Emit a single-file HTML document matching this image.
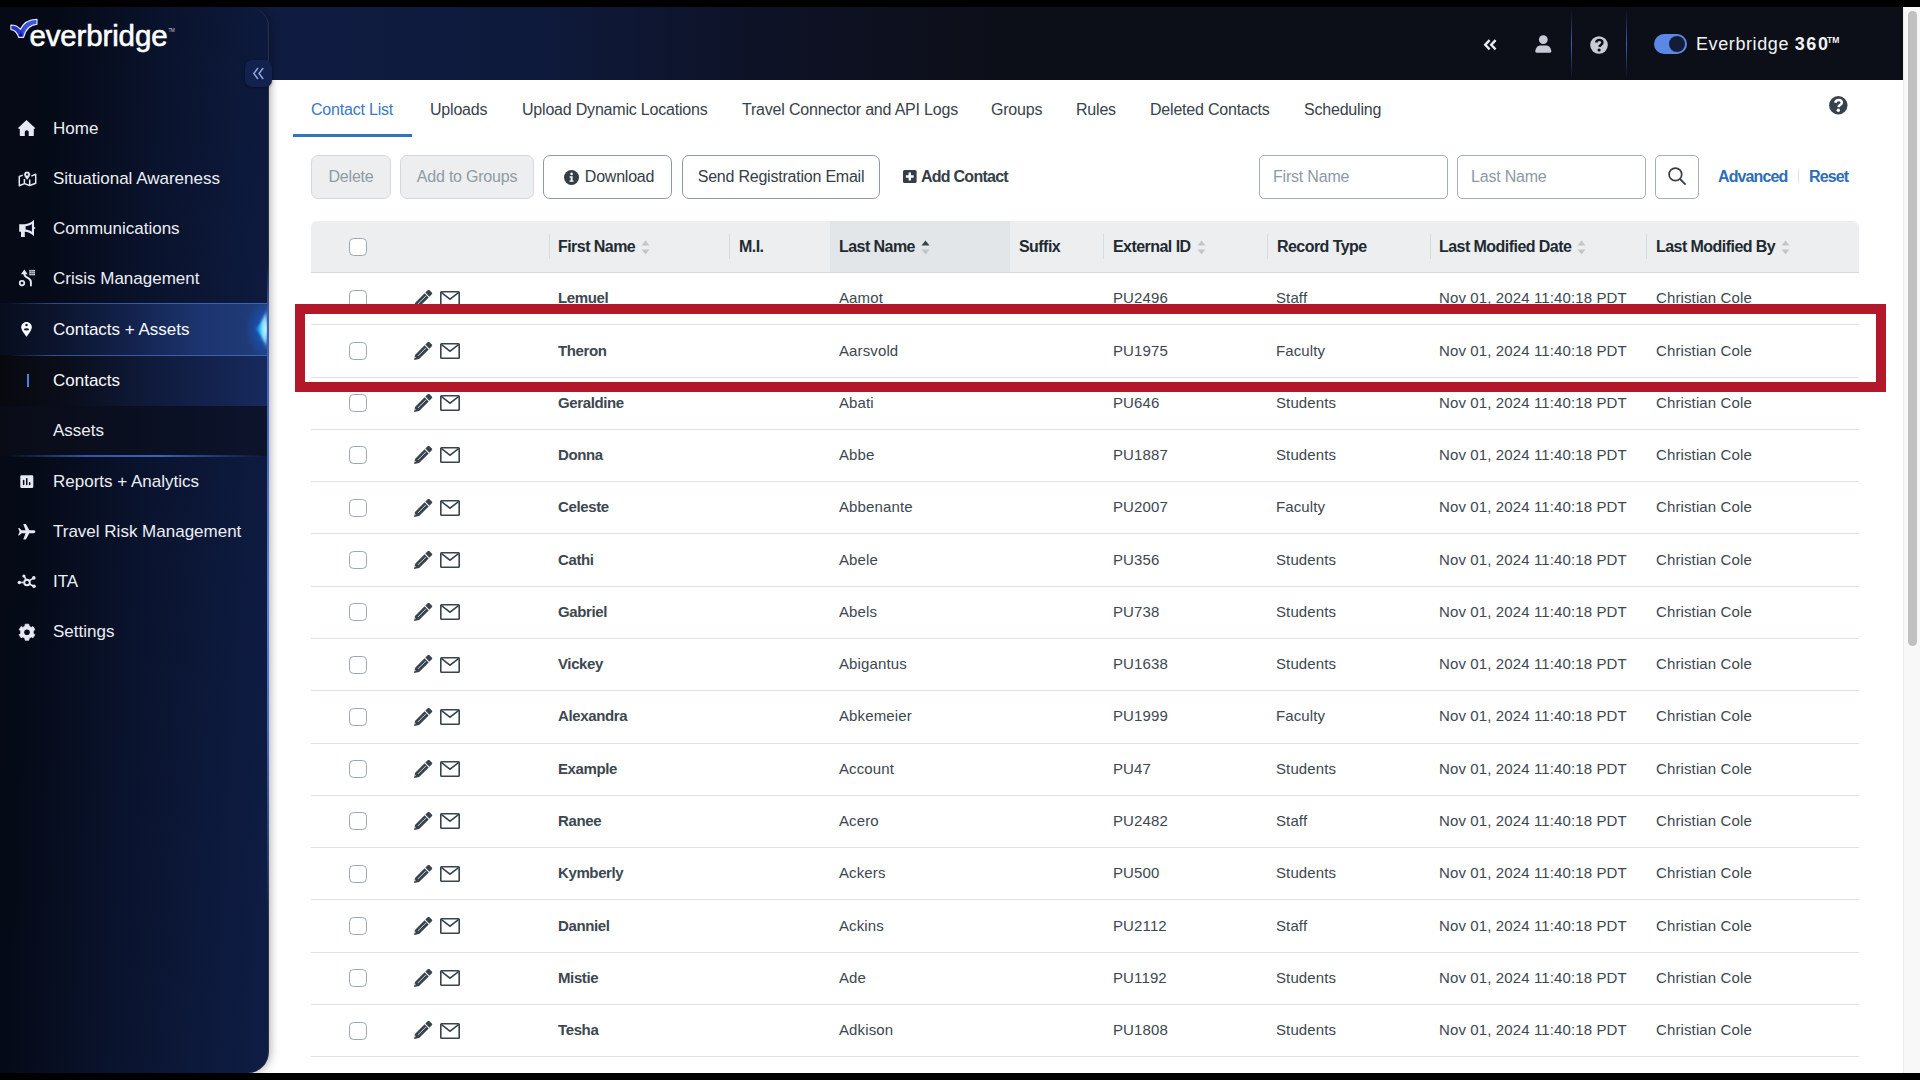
<!DOCTYPE html>
<html><head><meta charset="utf-8">
<style>
*{box-sizing:border-box;margin:0;padding:0}
html,body{width:1920px;height:1080px;overflow:hidden;background:#000;font-family:"Liberation Sans",sans-serif}
.abs{position:absolute}
#hdr{position:absolute;left:0;top:7px;width:1903px;height:73px;background:linear-gradient(90deg,#0f1b40 0px,#0f1b40 300px,#0e1a3b 540px,#0d1226 760px,#0c0f18 1000px,#0c0f17 1903px)}
#side{position:absolute;left:0;top:7px;width:269px;height:1066px;box-shadow:1px 0 10px rgba(0,0,0,.34);border-radius:0 20px 21px 0;background:linear-gradient(93deg,#050a16 0%,#050a17 18%,#0a142f 55%,#0f1d45 100%);overflow:hidden;border-right:1.5px solid #2c3142}
#main{position:absolute;left:230px;top:80px;width:1673px;height:993px;background:#fff;overflow:hidden}
#sb{position:absolute;left:1903px;top:7px;width:17px;height:1066px;background:#f8f8f8;border-left:1px solid #ececec}
#thumb{position:absolute;left:1908px;top:11px;width:9px;height:635px;border-radius:5px;background:#c1c1c1}
#coll{position:absolute;left:245px;top:60px;width:27px;height:27px;border-radius:7px;background:#13214e;box-shadow:0 1px 3px rgba(0,0,0,.4)}
.logo{position:absolute;left:29.5px;top:11.5px;color:#fff;font-size:29.5px;letter-spacing:-0.15px;font-weight:400;-webkit-text-stroke:0.6px #fff}
.nav{position:absolute;left:0;width:268px;height:50px;color:#eceef5;font-size:17px}
.nav span{position:absolute;left:53px;top:50%;margin-top:1px;transform:translateY(-50%);white-space:nowrap}
.nav svg{position:absolute;left:17px;top:50%;transform:translateY(-50%)}
.tab{position:absolute;top:101px;font-size:16px;color:#37424b;letter-spacing:-0.2px;white-space:nowrap}
.btn{position:absolute;top:155px;height:44px;border-radius:7px;border:1.3px solid #8d9ba6;background:#fff;font-size:16px;color:#343e47;letter-spacing:-0.22px;white-space:nowrap;display:flex;align-items:center;justify-content:center}
.btn.dis{background:#eceef0;border-color:#d3dadf;color:#8f9ba5}
.inp{position:absolute;top:155px;height:44px;border-radius:5px;border:1.4px solid #a3afb9;background:#fff;font-size:16px;color:#8d9aa6;letter-spacing:-0.2px;padding-left:13px;display:flex;align-items:center}
.link{position:absolute;top:168px;font-size:16px;color:#2d6db8;font-weight:700;letter-spacing:-0.9px}
#thead{position:absolute;left:311px;top:221px;width:1548px;height:52px;background:#eceef0;border-radius:6px 6px 0 0;border-bottom:1px solid #d4dade}
#lnhl{position:absolute;left:830px;top:221px;width:180px;height:51px;background:#e2e6e9}
.th{position:absolute;top:237.5px;font-size:16px;font-weight:700;color:#222a31;letter-spacing:-0.55px;white-space:nowrap}
.th svg{position:absolute;top:2px;margin-left:6px}
.sep{position:absolute;top:234px;width:1px;height:25px;background:#d6dbe0}
.row{position:absolute;left:311px;width:1548px;height:51px}
.rl{position:absolute;left:311px;width:1548px;height:1px;background:#dde2e6}
.cb{position:absolute;left:38.2px;top:16.3px;width:18px;height:18px;border:1.5px solid #9ba9b5;border-radius:4.5px;background:#fff}
.ic{position:absolute;left:102px;top:16.2px;height:19px}
.ic .pen{position:absolute;left:-0.5px;top:0px}
.ic .mail{position:absolute;left:27.3px;top:1.1px}
.c{position:absolute;top:15.9px;font-size:15px;color:#3c4750;letter-spacing:0.12px;white-space:nowrap}
.c.fn{left:247px;font-weight:700;letter-spacing:-0.38px}
.c.ln{left:528px}
.c.eid{left:802px}
.c.rt{left:965px}
.c.dt{left:1128px}
.c.by{left:1345px}
#hl{position:absolute;left:295px;top:304px;width:1591px;height:88px;border:10px solid #b21829}
</style></head>
<body>
<div id="hdr"></div>
<svg class="abs" style="left:1482px;top:38px" width="16" height="13" viewBox="0 0 16 13"><path d="M7.6 2.2 L3.2 6.8 L7.6 11.4 M13.6 2.2 L9.2 6.8 L13.6 11.4" fill="none" stroke="#e9ebf1" stroke-width="2.4"/></svg>
<svg class="abs" style="left:1535px;top:35px" width="17" height="18" viewBox="0 0 17 18"><circle cx="8.3" cy="4.6" r="4.4" fill="#c8cbd5"/><path d="M0.3 16.6 C0.3 12.4 3 10.4 5.6 10.4 H11 C13.6 10.4 16.3 12.4 16.3 16.6 C16.3 17.3 15.8 17.8 15.1 17.8 H1.5 C0.8 17.8 0.3 17.3 0.3 16.6 Z" fill="#c8cbd5"/></svg>
<div class="abs" style="left:1570.5px;top:10px;width:1.3px;height:68px;background:linear-gradient(180deg,rgba(40,70,150,0),#3c5fb0 50%,rgba(40,70,150,0))"></div>
<svg class="abs" style="left:1590px;top:36px" width="18" height="18" viewBox="0 0 18 18"><circle cx="9" cy="9" r="8.8" fill="#c8cbd5"/><path d="M6.1 6.6 C6.5 4.7 7.7 3.9 9.2 3.9 C11.1 3.9 12.5 5 12.5 6.6 C12.5 8.6 9.9 8.9 9.1 10.8" fill="none" stroke="#0c0f17" stroke-width="2.4"/><circle cx="9.1" cy="14" r="1.6" fill="#0c0f17"/></svg>
<div class="abs" style="left:1625.5px;top:10px;width:1.3px;height:68px;background:linear-gradient(180deg,rgba(40,70,150,0),#3c5fb0 50%,rgba(40,70,150,0))"></div>
<div class="abs" style="left:1654px;top:34px;width:33px;height:20px;border-radius:10px;background:#5b87e6"></div>
<div class="abs" style="left:1669px;top:36px;width:16px;height:16px;border-radius:50%;background:#141d38"></div>
<div class="abs" style="left:1696px;top:34px;font-size:18px;color:#f2f3f6;white-space:nowrap;letter-spacing:0.6px">Everbridge <b style="letter-spacing:1.6px">360</b><span style="font-size:8.5px;position:absolute;left:131px;top:1px;font-weight:700;letter-spacing:0">TM</span></div>
<div id="main"></div>
<div id="side">
  <div class="logo">everbridge</div>
  <svg class="abs" style="left:6px;top:7px" width="40" height="28" viewBox="0 0 40 28"><defs><linearGradient id="lg" x1="0" x2="1" y1="0" y2="0"><stop offset="0" stop-color="#2030c8"/><stop offset="0.45" stop-color="#2a3cd0"/><stop offset="0.5" stop-color="#3a52e2"/><stop offset="1" stop-color="#4058e8"/></linearGradient></defs><path d="M4.9 11 C8.5 11 12 12.5 14.5 15.3 C17 9 23 5.5 31 5.2 L31 10.2 C24 10.8 19.5 15 17.6 23.4 L12.6 23.4 C11 18 8 15.8 4.9 15.6 Z" fill="url(#lg)" stroke="#eef0ff" stroke-width="1.1" stroke-linejoin="round"/><path d="M13.4 22.6 L14.6 17.4 L16.6 22.6 Z" fill="#0a0a8a"/></svg>
  <div class="abs" style="left:168.5px;top:20.5px;color:#ccc;font-size:4.5px;letter-spacing:-0.2px">TM</div>
</div>

<!-- sidebar nav -->
<div class="abs" style="left:0;top:303px;width:266.5px;height:52px;background:linear-gradient(90deg,#080e1f 0%,#0b142c 20%,#13234e 50%,#1c356f 75%,#213c7a 100%)"></div>
<div class="abs" style="left:236px;top:304px;width:30.5px;height:50.5px;background:radial-gradient(ellipse 22px 30px at 100% 50%,rgba(20,120,235,.95) 0%,rgba(20,95,210,.55) 45%,rgba(25,70,170,0) 100%)"></div>
<div class="abs" style="left:252px;top:306px;width:15px;height:46px;filter:blur(1.2px)"><div style="position:absolute;left:1px;top:2px;width:13.5px;height:42px;clip-path:polygon(100% 0%,90% 14%,60% 35%,20% 50%,60% 65%,90% 86%,100% 100%);background:linear-gradient(90deg,rgba(30,140,240,0) 0%,#1aa0f0 45%,#70e4ff 75%,#f4ffff 100%);-webkit-mask-image:linear-gradient(180deg,rgba(0,0,0,.3) 0%,#000 38%,#000 62%,rgba(0,0,0,.3) 100%)"></div></div>
<div class="abs" style="left:258px;top:312px;width:8.5px;height:34px;filter:blur(1px);background:radial-gradient(ellipse 8px 16px at 100% 50%,rgba(240,255,255,.95) 0%,rgba(150,235,255,.7) 45%,rgba(60,180,255,0) 100%)"></div>
<div class="abs" style="left:0;top:355px;width:266.5px;height:51px;background:linear-gradient(90deg,#08090e 0%,#0a0e1a 25%,#0f1a3a 55%,#172a5e 100%)"></div>
<div class="abs" style="left:0;top:406px;width:266.5px;height:50px;background:linear-gradient(90deg,#090c17 0%,#0a0f20 50%,#0c142c 100%)"></div>
<div class="abs" style="left:0;top:302.5px;width:266.5px;height:1.5px;background:linear-gradient(90deg,rgba(60,100,190,0) 3%,#2c4a8c 20%,#3a5ea8 60%,#3f64b0 100%)"></div>
<div class="abs" style="left:0;top:354.5px;width:266.5px;height:1.5px;background:linear-gradient(90deg,rgba(60,100,190,0) 3%,#31528f 20%,#3c60a8 60%,#3f64b0 100%)"></div>
<div class="abs" style="left:8px;top:455px;width:255px;height:1.5px;background:linear-gradient(90deg,rgba(60,100,190,0),#2f55a8 30%,#3a64b8 60%,rgba(70,110,200,0))"></div>
<div class="abs" style="left:26.7px;top:374.3px;width:2.5px;height:12.5px;background:#4a7fe6"></div>

<div class="nav" style="top:103px"><svg width="26" height="26" viewBox="0 0 26 26" style="left:14px;top:12px;transform:none"><path d="M12.5 5 L21.4 13.2 L19.8 14.1 V20.2 C19.8 20.7 19.4 21.1 18.9 21.1 H14.7 V17 C14.7 16 13.9 15.3 12.8 15.3 C11.7 15.3 10.8 16 10.8 17 V21.1 H6.7 C6.2 21.1 5.8 20.7 5.8 20.2 V14.1 L3.8 13.2 Z" fill="#e6e9f4"/></svg><span>Home</span></div>
<div class="nav" style="top:153px"><svg width="26" height="26" viewBox="0 0 26 26" style="left:14px;top:13px;transform:none"><path d="M8.7 9.3 L5.3 10.4 V19.8 L10.4 17.6 L15.7 19.5 L21.7 17.3 V8.2 L17.3 10.1" fill="none" stroke="#e6e9f4" stroke-width="1.5" stroke-linejoin="round"/><path d="M10.4 13 V17.6 M15.7 13.5 V19.5" stroke="#e6e9f4" stroke-width="1.5"/><path d="M13.1 5.2 C15.1 5.2 16.5 6.7 16.5 8.6 C16.5 10.6 13.1 14.2 13.1 14.2 C13.1 14.2 9.7 10.6 9.7 8.6 C9.7 6.7 11.1 5.2 13.1 5.2 Z" fill="#e6e9f4" stroke="#070d1e" stroke-width="0.8"/><circle cx="13.1" cy="8.6" r="1.1" fill="#070d1e"/></svg><span>Situational Awareness</span></div>
<div class="nav" style="top:203px"><svg width="26" height="26" viewBox="0 0 26 26" style="left:14px;top:13px;transform:none"><path d="M5.2 8.2 H10.8 C14 8.2 17 6.6 20 4.1 V20 C17 17.4 14 15.7 10.8 15.7 V21 H7 V15.7 H5.2 Z" fill="#e6e9f4"/><path d="M11.6 10.3 C13.6 10.2 15.8 9.4 17.9 8.1 V15.8 C15.8 14.5 13.6 13.7 11.6 13.6 Z" fill="#070d1e"/><path d="M20 10.8 L21.6 12 L20 13.2 Z" fill="#e6e9f4"/></svg><span>Communications</span></div>
<div class="nav" style="top:253px"><svg width="26" height="26" viewBox="0 0 26 26" style="left:14px;top:12px;transform:none"><circle cx="8" cy="18.1" r="2.3" fill="none" stroke="#e6e9f4" stroke-width="1.7"/><path d="M16.9 20.6 V17 C16.9 14.2 14.8 13.3 12.8 12.3 C11.2 11.5 10.3 10.4 10.3 8.6 V8.2" fill="none" stroke="#e6e9f4" stroke-width="1.9" stroke-linecap="round"/><path d="M10.3 4.6 L13.6 9.2 H7 Z" fill="#e6e9f4"/><rect x="15.4" y="4.9" width="5.5" height="5.4" fill="#e6e9f4"/><path d="M17.2 4.9 V10.3 M19.1 4.9 V10.3 M15.4 6.7 H20.9 M15.4 8.5 H20.9" stroke="#070d1e" stroke-width="0.45"/></svg><span>Crisis Management</span></div>
<div class="nav" style="top:304px"><svg width="26" height="26" viewBox="0 0 26 26" style="left:14px;top:12px;transform:none"><path d="M12.5 6 C15.5 6 17.8 8.3 17.8 11.3 C17.8 14.6 12.5 20.8 12.5 20.8 C12.5 20.8 7.2 14.6 7.2 11.3 C7.2 8.3 9.5 6 12.5 6 Z" fill="#fafbff"/><circle cx="12.5" cy="8.9" r="1.25" fill="#0f1b3c"/><ellipse cx="12.5" cy="13.4" rx="2.6" ry="1.15" fill="#0f1b3c"/></svg><span style="color:#fafbff">Contacts + Assets</span></div>
<div class="nav" style="top:355px"><span style="color:#fafbff">Contacts</span></div>
<div class="nav" style="top:405px"><span>Assets</span></div>
<div class="nav" style="top:456px"><svg width="26" height="26" viewBox="0 0 26 26" style="left:14px;top:12px;transform:none"><rect x="6.3" y="7.2" width="13" height="12.8" rx="1.3" fill="#e6e9f4"/><path d="M9.65 12.4 V16.6 M12.75 10.7 V16.6 M15.65 14.8 V16.6" stroke="#070d1e" stroke-width="1.5" stroke-linecap="round"/></svg><span>Reports + Analytics</span></div>
<div class="nav" style="top:506px"><svg width="26" height="26" viewBox="0 0 26 26" style="left:14px;top:12px;transform:none"><path d="M4.2 10.3 C4.5 10 5.3 10 5.8 10.4 L7.6 12.3 H11.6 L9.4 6.6 C9.3 6.2 9.6 6 10 6 H11.4 C11.8 6 12 6.1 12.2 6.4 L15.3 12.3 H19.6 C20.6 12.3 21.3 12.9 21.3 13.75 C21.3 14.6 20.6 15.2 19.6 15.2 H15.3 L12.2 21.1 C12 21.4 11.8 21.5 11.4 21.5 H10 C9.6 21.5 9.3 21.3 9.4 20.9 L11.6 15.2 H7.6 L5.8 17.1 C5.3 17.5 4.5 17.5 4.2 17.2 L5.6 13.75 Z" fill="#e6e9f4"/></svg><span>Travel Risk Management</span></div>
<div class="nav" style="top:556px"><svg width="26" height="26" viewBox="0 0 26 26" style="left:14px;top:12px;transform:none"><path d="M5.3 14.5 H9.5 M9.9 8 L12 11.4 M19.8 9.9 L15.5 12.6 M20 18.3 L15.6 16.2" stroke="#e6e9f4" stroke-width="1.5"/><circle cx="13" cy="14.5" r="2.8" fill="none" stroke="#e6e9f4" stroke-width="2"/><circle cx="5.3" cy="14.5" r="1.7" fill="#e6e9f4"/><circle cx="9.9" cy="8" r="1.6" fill="#e6e9f4"/><circle cx="19.8" cy="9.9" r="1.8" fill="#e6e9f4"/><circle cx="20" cy="18.3" r="1.8" fill="#e6e9f4"/></svg><span>ITA</span></div>
<div class="nav" style="top:606px"><svg width="26" height="26" viewBox="0 0 26 26" style="left:14px;top:12px;transform:none"><path d="M9.85 8.74 L10.95 8.24 L11.16 6.21 L14.84 6.21 L15.05 8.24 L16.15 8.74 L17.13 9.45 L19.00 8.61 L20.84 11.80 L19.18 13.00 L19.30 14.20 L19.18 15.40 L20.84 16.60 L19.00 19.79 L17.13 18.95 L16.15 19.66 L15.05 20.16 L14.84 22.19 L11.16 22.19 L10.95 20.16 L9.85 19.66 L8.87 18.95 L7.00 19.79 L5.16 16.60 L6.82 15.40 L6.70 14.20 L6.82 13.00 L5.16 11.80 L7.00 8.61 L8.87 9.45 Z" fill="#e6e9f4" stroke="#e6e9f4" stroke-width="0.8" stroke-linejoin="round"/><circle cx="13" cy="14.2" r="2.8" fill="#070d1e"/></svg><span>Settings</span></div>

<div class="abs" style="left:266.5px;top:262px;width:2.5px;height:660px;background:linear-gradient(180deg,rgba(60,90,170,0) 0%,#4560a8 8%,#4a6cc0 30%,#5a80d8 50%,#4a6cc0 70%,rgba(60,90,170,0) 100%)"></div>
<div id="coll"><svg style="position:absolute;left:7px;top:7px" width="13" height="13" viewBox="0 0 13 13"><path d="M6 1 L1.8 6.5 L6 12 M11.2 1 L7 6.5 L11.2 12" fill="none" stroke="#8ea6e0" stroke-width="1.5"/></svg></div>

<div id="sb"></div><div id="thumb"></div>

<!-- tabs -->
<div class="tab" style="left:311px;color:#3a78c5">Contact List</div>
<div class="abs" style="left:293px;top:134.2px;width:119px;height:2.6px;background:#3074bb"></div>
<div class="tab" style="left:430px">Uploads</div>
<div class="tab" style="left:522px">Upload Dynamic Locations</div>
<div class="tab" style="left:742px">Travel Connector and API Logs</div>
<div class="tab" style="left:991px">Groups</div>
<div class="tab" style="left:1076px">Rules</div>
<div class="tab" style="left:1150px">Deleted Contacts</div>
<div class="tab" style="left:1304px">Scheduling</div>

<svg class="abs" style="left:1829px;top:96.2px" width="19" height="19" viewBox="0 0 19 19"><circle cx="9.3" cy="9.2" r="9.2" fill="#37434c"/><path d="M6.3 6.7 C6.7 4.8 7.9 4 9.5 4 C11.4 4 12.8 5.1 12.8 6.7 C12.8 8.7 10.1 9 9.3 11" fill="none" stroke="#fff" stroke-width="2.5"/><circle cx="9.3" cy="14.3" r="1.7" fill="#fff"/></svg>
<!-- buttons -->
<div class="btn dis" style="left:311px;width:80px">Delete</div>
<div class="btn dis" style="left:400px;width:134px">Add to Groups</div>
<div class="btn" style="left:543px;width:129px"><svg width="15" height="15" viewBox="0 0 15 15" style="margin-right:6px;margin-left:3px"><circle cx="7.5" cy="7.5" r="7.5" fill="#343e47"/><circle cx="7.6" cy="3.9" r="1.3" fill="#fff"/><path d="M5.6 6.2 H8.6 V10.6 H9.6 V11.8 H5.6 V10.6 H6.6 V7.4 H5.6 Z" fill="#fff"/></svg>Download</div>
<div class="btn" style="left:682px;width:198px">Send Registration Email</div>
<svg class="abs" style="left:903px;top:170px" width="14" height="13" viewBox="0 0 14 13"><rect x="0" y="0" width="13.6" height="13" rx="1.6" fill="#343e47"/><path d="M6.8 2.6 V10.4 M2.9 6.5 H10.7" stroke="#fff" stroke-width="2.4"/></svg><div class="abs" style="left:921px;top:168px;font-size:16px;font-weight:700;color:#343e47;letter-spacing:-0.75px">Add Contact</div>

<div class="inp" style="left:1259px;width:189px">First Name</div>
<div class="inp" style="left:1457px;width:189px">Last Name</div>
<div class="inp" style="left:1655px;width:44px;border-radius:5px"></div><svg class="abs" style="left:1667px;top:166px" width="20" height="20" viewBox="0 0 20 20"><circle cx="8.4" cy="8.4" r="6.3" fill="none" stroke="#343e47" stroke-width="1.7"/><path d="M13 13 L18.6 18.6" stroke="#343e47" stroke-width="1.8"/></svg>
<div class="link" style="left:1718px">Advanced</div>
<div class="abs" style="left:1798px;top:169px;width:1px;height:14px;background:#dfe3e7"></div>
<div class="link" style="left:1809px">Reset</div>

<!-- table -->
<div id="thead"></div>
<div id="lnhl"></div>
<div class="abs" style="left:311px;top:221.7px"><div class="cb"></div></div>
<div class="sep" style="left:549px"></div>
<div class="sep" style="left:729px"></div>
<div class="sep" style="left:1103px"></div>
<div class="sep" style="left:1267px"></div>
<div class="sep" style="left:1430px"></div>
<div class="sep" style="left:1646px"></div>
<div class="th" style="left:558px">First Name<svg class="sort" width="9" height="15" viewBox="0 0 9 15"><path d="M4.5 0.5 L8.5 5.5 H0.5 Z" fill="#c3c5c7"/><path d="M4.5 14.5 L8.5 9.5 H0.5 Z" fill="#c3c5c7"/></svg></div>
<div class="th" style="left:739px">M.I.</div>
<div class="th" style="left:839px">Last Name<svg class="sort" width="9" height="15" viewBox="0 0 9 15"><path d="M4.5 0.5 L8.5 5.5 H0.5 Z" fill="#37434d"/><path d="M4.5 14.5 L8.5 9.5 H0.5 Z" fill="#c3c5c7"/></svg></div>
<div class="th" style="left:1019px">Suffix</div>
<div class="th" style="left:1113px">External ID<svg class="sort" width="9" height="15" viewBox="0 0 9 15"><path d="M4.5 0.5 L8.5 5.5 H0.5 Z" fill="#c3c5c7"/><path d="M4.5 14.5 L8.5 9.5 H0.5 Z" fill="#c3c5c7"/></svg></div>
<div class="th" style="left:1277px">Record Type</div>
<div class="th" style="left:1439px">Last Modified Date<svg class="sort" width="9" height="15" viewBox="0 0 9 15"><path d="M4.5 0.5 L8.5 5.5 H0.5 Z" fill="#c3c5c7"/><path d="M4.5 14.5 L8.5 9.5 H0.5 Z" fill="#c3c5c7"/></svg></div>
<div class="th" style="left:1656px">Last Modified By<svg class="sort" width="9" height="15" viewBox="0 0 9 15"><path d="M4.5 0.5 L8.5 5.5 H0.5 Z" fill="#c3c5c7"/><path d="M4.5 14.5 L8.5 9.5 H0.5 Z" fill="#c3c5c7"/></svg></div>

<div class="rl" style="top:324px"></div><div class="row" style="top:273.35px"><div class="cb"></div><div class="ic"><svg class="pen" width="20" height="20" viewBox="0 0 20 20"><path d="M12.31 2.59 L14.72 0.18 Q15.64 -0.74 16.56 0.18 L18.82 2.44 Q19.74 3.36 18.82 4.28 L16.41 6.69 Z M1.99 12.91 L11.61 3.29 L15.71 7.39 L6.09 17.01 L1.00 18.00 Z" fill="#37434d"/><path d="M4.89 13.97 L13.09 5.77" stroke="#fff" stroke-width="0.75"/><path d="M1.42 16.16 L1.78 14.11 L2.70 16.02 Z" fill="#fff"/></svg><svg class="mail" width="20" height="16" viewBox="0 0 20 16"><rect x="0.8" y="0.8" width="18.4" height="14.4" rx="0.8" fill="none" stroke="#37434d" stroke-width="1.6"/><path d="M1.2 1.4 L10 8.2 L18.8 1.4" fill="none" stroke="#37434d" stroke-width="1.5"/></svg></div><div class="c fn">Lemuel</div><div class="c ln">Aamot</div><div class="c eid">PU2496</div><div class="c rt">Staff</div><div class="c dt">Nov 01, 2024 11:40:18 PDT</div><div class="c by">Christian Cole</div></div>
<div class="rl" style="top:377px"></div><div class="row" style="top:325.63px"><div class="cb"></div><div class="ic"><svg class="pen" width="20" height="20" viewBox="0 0 20 20"><path d="M12.31 2.59 L14.72 0.18 Q15.64 -0.74 16.56 0.18 L18.82 2.44 Q19.74 3.36 18.82 4.28 L16.41 6.69 Z M1.99 12.91 L11.61 3.29 L15.71 7.39 L6.09 17.01 L1.00 18.00 Z" fill="#37434d"/><path d="M4.89 13.97 L13.09 5.77" stroke="#fff" stroke-width="0.75"/><path d="M1.42 16.16 L1.78 14.11 L2.70 16.02 Z" fill="#fff"/></svg><svg class="mail" width="20" height="16" viewBox="0 0 20 16"><rect x="0.8" y="0.8" width="18.4" height="14.4" rx="0.8" fill="none" stroke="#37434d" stroke-width="1.6"/><path d="M1.2 1.4 L10 8.2 L18.8 1.4" fill="none" stroke="#37434d" stroke-width="1.5"/></svg></div><div class="c fn">Theron</div><div class="c ln">Aarsvold</div><div class="c eid">PU1975</div><div class="c rt">Faculty</div><div class="c dt">Nov 01, 2024 11:40:18 PDT</div><div class="c by">Christian Cole</div></div>
<div class="rl" style="top:429px"></div><div class="row" style="top:377.91px"><div class="cb"></div><div class="ic"><svg class="pen" width="20" height="20" viewBox="0 0 20 20"><path d="M12.31 2.59 L14.72 0.18 Q15.64 -0.74 16.56 0.18 L18.82 2.44 Q19.74 3.36 18.82 4.28 L16.41 6.69 Z M1.99 12.91 L11.61 3.29 L15.71 7.39 L6.09 17.01 L1.00 18.00 Z" fill="#37434d"/><path d="M4.89 13.97 L13.09 5.77" stroke="#fff" stroke-width="0.75"/><path d="M1.42 16.16 L1.78 14.11 L2.70 16.02 Z" fill="#fff"/></svg><svg class="mail" width="20" height="16" viewBox="0 0 20 16"><rect x="0.8" y="0.8" width="18.4" height="14.4" rx="0.8" fill="none" stroke="#37434d" stroke-width="1.6"/><path d="M1.2 1.4 L10 8.2 L18.8 1.4" fill="none" stroke="#37434d" stroke-width="1.5"/></svg></div><div class="c fn">Geraldine</div><div class="c ln">Abati</div><div class="c eid">PU646</div><div class="c rt">Students</div><div class="c dt">Nov 01, 2024 11:40:18 PDT</div><div class="c by">Christian Cole</div></div>
<div class="rl" style="top:481px"></div><div class="row" style="top:430.19px"><div class="cb"></div><div class="ic"><svg class="pen" width="20" height="20" viewBox="0 0 20 20"><path d="M12.31 2.59 L14.72 0.18 Q15.64 -0.74 16.56 0.18 L18.82 2.44 Q19.74 3.36 18.82 4.28 L16.41 6.69 Z M1.99 12.91 L11.61 3.29 L15.71 7.39 L6.09 17.01 L1.00 18.00 Z" fill="#37434d"/><path d="M4.89 13.97 L13.09 5.77" stroke="#fff" stroke-width="0.75"/><path d="M1.42 16.16 L1.78 14.11 L2.70 16.02 Z" fill="#fff"/></svg><svg class="mail" width="20" height="16" viewBox="0 0 20 16"><rect x="0.8" y="0.8" width="18.4" height="14.4" rx="0.8" fill="none" stroke="#37434d" stroke-width="1.6"/><path d="M1.2 1.4 L10 8.2 L18.8 1.4" fill="none" stroke="#37434d" stroke-width="1.5"/></svg></div><div class="c fn">Donna</div><div class="c ln">Abbe</div><div class="c eid">PU1887</div><div class="c rt">Students</div><div class="c dt">Nov 01, 2024 11:40:18 PDT</div><div class="c by">Christian Cole</div></div>
<div class="rl" style="top:533px"></div><div class="row" style="top:482.46px"><div class="cb"></div><div class="ic"><svg class="pen" width="20" height="20" viewBox="0 0 20 20"><path d="M12.31 2.59 L14.72 0.18 Q15.64 -0.74 16.56 0.18 L18.82 2.44 Q19.74 3.36 18.82 4.28 L16.41 6.69 Z M1.99 12.91 L11.61 3.29 L15.71 7.39 L6.09 17.01 L1.00 18.00 Z" fill="#37434d"/><path d="M4.89 13.97 L13.09 5.77" stroke="#fff" stroke-width="0.75"/><path d="M1.42 16.16 L1.78 14.11 L2.70 16.02 Z" fill="#fff"/></svg><svg class="mail" width="20" height="16" viewBox="0 0 20 16"><rect x="0.8" y="0.8" width="18.4" height="14.4" rx="0.8" fill="none" stroke="#37434d" stroke-width="1.6"/><path d="M1.2 1.4 L10 8.2 L18.8 1.4" fill="none" stroke="#37434d" stroke-width="1.5"/></svg></div><div class="c fn">Celeste</div><div class="c ln">Abbenante</div><div class="c eid">PU2007</div><div class="c rt">Faculty</div><div class="c dt">Nov 01, 2024 11:40:18 PDT</div><div class="c by">Christian Cole</div></div>
<div class="rl" style="top:586px"></div><div class="row" style="top:534.74px"><div class="cb"></div><div class="ic"><svg class="pen" width="20" height="20" viewBox="0 0 20 20"><path d="M12.31 2.59 L14.72 0.18 Q15.64 -0.74 16.56 0.18 L18.82 2.44 Q19.74 3.36 18.82 4.28 L16.41 6.69 Z M1.99 12.91 L11.61 3.29 L15.71 7.39 L6.09 17.01 L1.00 18.00 Z" fill="#37434d"/><path d="M4.89 13.97 L13.09 5.77" stroke="#fff" stroke-width="0.75"/><path d="M1.42 16.16 L1.78 14.11 L2.70 16.02 Z" fill="#fff"/></svg><svg class="mail" width="20" height="16" viewBox="0 0 20 16"><rect x="0.8" y="0.8" width="18.4" height="14.4" rx="0.8" fill="none" stroke="#37434d" stroke-width="1.6"/><path d="M1.2 1.4 L10 8.2 L18.8 1.4" fill="none" stroke="#37434d" stroke-width="1.5"/></svg></div><div class="c fn">Cathi</div><div class="c ln">Abele</div><div class="c eid">PU356</div><div class="c rt">Students</div><div class="c dt">Nov 01, 2024 11:40:18 PDT</div><div class="c by">Christian Cole</div></div>
<div class="rl" style="top:638px"></div><div class="row" style="top:587.02px"><div class="cb"></div><div class="ic"><svg class="pen" width="20" height="20" viewBox="0 0 20 20"><path d="M12.31 2.59 L14.72 0.18 Q15.64 -0.74 16.56 0.18 L18.82 2.44 Q19.74 3.36 18.82 4.28 L16.41 6.69 Z M1.99 12.91 L11.61 3.29 L15.71 7.39 L6.09 17.01 L1.00 18.00 Z" fill="#37434d"/><path d="M4.89 13.97 L13.09 5.77" stroke="#fff" stroke-width="0.75"/><path d="M1.42 16.16 L1.78 14.11 L2.70 16.02 Z" fill="#fff"/></svg><svg class="mail" width="20" height="16" viewBox="0 0 20 16"><rect x="0.8" y="0.8" width="18.4" height="14.4" rx="0.8" fill="none" stroke="#37434d" stroke-width="1.6"/><path d="M1.2 1.4 L10 8.2 L18.8 1.4" fill="none" stroke="#37434d" stroke-width="1.5"/></svg></div><div class="c fn">Gabriel</div><div class="c ln">Abels</div><div class="c eid">PU738</div><div class="c rt">Students</div><div class="c dt">Nov 01, 2024 11:40:18 PDT</div><div class="c by">Christian Cole</div></div>
<div class="rl" style="top:690px"></div><div class="row" style="top:639.30px"><div class="cb"></div><div class="ic"><svg class="pen" width="20" height="20" viewBox="0 0 20 20"><path d="M12.31 2.59 L14.72 0.18 Q15.64 -0.74 16.56 0.18 L18.82 2.44 Q19.74 3.36 18.82 4.28 L16.41 6.69 Z M1.99 12.91 L11.61 3.29 L15.71 7.39 L6.09 17.01 L1.00 18.00 Z" fill="#37434d"/><path d="M4.89 13.97 L13.09 5.77" stroke="#fff" stroke-width="0.75"/><path d="M1.42 16.16 L1.78 14.11 L2.70 16.02 Z" fill="#fff"/></svg><svg class="mail" width="20" height="16" viewBox="0 0 20 16"><rect x="0.8" y="0.8" width="18.4" height="14.4" rx="0.8" fill="none" stroke="#37434d" stroke-width="1.6"/><path d="M1.2 1.4 L10 8.2 L18.8 1.4" fill="none" stroke="#37434d" stroke-width="1.5"/></svg></div><div class="c fn">Vickey</div><div class="c ln">Abigantus</div><div class="c eid">PU1638</div><div class="c rt">Students</div><div class="c dt">Nov 01, 2024 11:40:18 PDT</div><div class="c by">Christian Cole</div></div>
<div class="rl" style="top:743px"></div><div class="row" style="top:691.58px"><div class="cb"></div><div class="ic"><svg class="pen" width="20" height="20" viewBox="0 0 20 20"><path d="M12.31 2.59 L14.72 0.18 Q15.64 -0.74 16.56 0.18 L18.82 2.44 Q19.74 3.36 18.82 4.28 L16.41 6.69 Z M1.99 12.91 L11.61 3.29 L15.71 7.39 L6.09 17.01 L1.00 18.00 Z" fill="#37434d"/><path d="M4.89 13.97 L13.09 5.77" stroke="#fff" stroke-width="0.75"/><path d="M1.42 16.16 L1.78 14.11 L2.70 16.02 Z" fill="#fff"/></svg><svg class="mail" width="20" height="16" viewBox="0 0 20 16"><rect x="0.8" y="0.8" width="18.4" height="14.4" rx="0.8" fill="none" stroke="#37434d" stroke-width="1.6"/><path d="M1.2 1.4 L10 8.2 L18.8 1.4" fill="none" stroke="#37434d" stroke-width="1.5"/></svg></div><div class="c fn">Alexandra</div><div class="c ln">Abkemeier</div><div class="c eid">PU1999</div><div class="c rt">Faculty</div><div class="c dt">Nov 01, 2024 11:40:18 PDT</div><div class="c by">Christian Cole</div></div>
<div class="rl" style="top:795px"></div><div class="row" style="top:743.86px"><div class="cb"></div><div class="ic"><svg class="pen" width="20" height="20" viewBox="0 0 20 20"><path d="M12.31 2.59 L14.72 0.18 Q15.64 -0.74 16.56 0.18 L18.82 2.44 Q19.74 3.36 18.82 4.28 L16.41 6.69 Z M1.99 12.91 L11.61 3.29 L15.71 7.39 L6.09 17.01 L1.00 18.00 Z" fill="#37434d"/><path d="M4.89 13.97 L13.09 5.77" stroke="#fff" stroke-width="0.75"/><path d="M1.42 16.16 L1.78 14.11 L2.70 16.02 Z" fill="#fff"/></svg><svg class="mail" width="20" height="16" viewBox="0 0 20 16"><rect x="0.8" y="0.8" width="18.4" height="14.4" rx="0.8" fill="none" stroke="#37434d" stroke-width="1.6"/><path d="M1.2 1.4 L10 8.2 L18.8 1.4" fill="none" stroke="#37434d" stroke-width="1.5"/></svg></div><div class="c fn">Example</div><div class="c ln">Account</div><div class="c eid">PU47</div><div class="c rt">Students</div><div class="c dt">Nov 01, 2024 11:40:18 PDT</div><div class="c by">Christian Cole</div></div>
<div class="rl" style="top:847px"></div><div class="row" style="top:796.14px"><div class="cb"></div><div class="ic"><svg class="pen" width="20" height="20" viewBox="0 0 20 20"><path d="M12.31 2.59 L14.72 0.18 Q15.64 -0.74 16.56 0.18 L18.82 2.44 Q19.74 3.36 18.82 4.28 L16.41 6.69 Z M1.99 12.91 L11.61 3.29 L15.71 7.39 L6.09 17.01 L1.00 18.00 Z" fill="#37434d"/><path d="M4.89 13.97 L13.09 5.77" stroke="#fff" stroke-width="0.75"/><path d="M1.42 16.16 L1.78 14.11 L2.70 16.02 Z" fill="#fff"/></svg><svg class="mail" width="20" height="16" viewBox="0 0 20 16"><rect x="0.8" y="0.8" width="18.4" height="14.4" rx="0.8" fill="none" stroke="#37434d" stroke-width="1.6"/><path d="M1.2 1.4 L10 8.2 L18.8 1.4" fill="none" stroke="#37434d" stroke-width="1.5"/></svg></div><div class="c fn">Ranee</div><div class="c ln">Acero</div><div class="c eid">PU2482</div><div class="c rt">Staff</div><div class="c dt">Nov 01, 2024 11:40:18 PDT</div><div class="c by">Christian Cole</div></div>
<div class="rl" style="top:899px"></div><div class="row" style="top:848.41px"><div class="cb"></div><div class="ic"><svg class="pen" width="20" height="20" viewBox="0 0 20 20"><path d="M12.31 2.59 L14.72 0.18 Q15.64 -0.74 16.56 0.18 L18.82 2.44 Q19.74 3.36 18.82 4.28 L16.41 6.69 Z M1.99 12.91 L11.61 3.29 L15.71 7.39 L6.09 17.01 L1.00 18.00 Z" fill="#37434d"/><path d="M4.89 13.97 L13.09 5.77" stroke="#fff" stroke-width="0.75"/><path d="M1.42 16.16 L1.78 14.11 L2.70 16.02 Z" fill="#fff"/></svg><svg class="mail" width="20" height="16" viewBox="0 0 20 16"><rect x="0.8" y="0.8" width="18.4" height="14.4" rx="0.8" fill="none" stroke="#37434d" stroke-width="1.6"/><path d="M1.2 1.4 L10 8.2 L18.8 1.4" fill="none" stroke="#37434d" stroke-width="1.5"/></svg></div><div class="c fn">Kymberly</div><div class="c ln">Ackers</div><div class="c eid">PU500</div><div class="c rt">Students</div><div class="c dt">Nov 01, 2024 11:40:18 PDT</div><div class="c by">Christian Cole</div></div>
<div class="rl" style="top:952px"></div><div class="row" style="top:900.69px"><div class="cb"></div><div class="ic"><svg class="pen" width="20" height="20" viewBox="0 0 20 20"><path d="M12.31 2.59 L14.72 0.18 Q15.64 -0.74 16.56 0.18 L18.82 2.44 Q19.74 3.36 18.82 4.28 L16.41 6.69 Z M1.99 12.91 L11.61 3.29 L15.71 7.39 L6.09 17.01 L1.00 18.00 Z" fill="#37434d"/><path d="M4.89 13.97 L13.09 5.77" stroke="#fff" stroke-width="0.75"/><path d="M1.42 16.16 L1.78 14.11 L2.70 16.02 Z" fill="#fff"/></svg><svg class="mail" width="20" height="16" viewBox="0 0 20 16"><rect x="0.8" y="0.8" width="18.4" height="14.4" rx="0.8" fill="none" stroke="#37434d" stroke-width="1.6"/><path d="M1.2 1.4 L10 8.2 L18.8 1.4" fill="none" stroke="#37434d" stroke-width="1.5"/></svg></div><div class="c fn">Danniel</div><div class="c ln">Ackins</div><div class="c eid">PU2112</div><div class="c rt">Staff</div><div class="c dt">Nov 01, 2024 11:40:18 PDT</div><div class="c by">Christian Cole</div></div>
<div class="rl" style="top:1004px"></div><div class="row" style="top:952.97px"><div class="cb"></div><div class="ic"><svg class="pen" width="20" height="20" viewBox="0 0 20 20"><path d="M12.31 2.59 L14.72 0.18 Q15.64 -0.74 16.56 0.18 L18.82 2.44 Q19.74 3.36 18.82 4.28 L16.41 6.69 Z M1.99 12.91 L11.61 3.29 L15.71 7.39 L6.09 17.01 L1.00 18.00 Z" fill="#37434d"/><path d="M4.89 13.97 L13.09 5.77" stroke="#fff" stroke-width="0.75"/><path d="M1.42 16.16 L1.78 14.11 L2.70 16.02 Z" fill="#fff"/></svg><svg class="mail" width="20" height="16" viewBox="0 0 20 16"><rect x="0.8" y="0.8" width="18.4" height="14.4" rx="0.8" fill="none" stroke="#37434d" stroke-width="1.6"/><path d="M1.2 1.4 L10 8.2 L18.8 1.4" fill="none" stroke="#37434d" stroke-width="1.5"/></svg></div><div class="c fn">Mistie</div><div class="c ln">Ade</div><div class="c eid">PU1192</div><div class="c rt">Students</div><div class="c dt">Nov 01, 2024 11:40:18 PDT</div><div class="c by">Christian Cole</div></div>
<div class="rl" style="top:1056px"></div><div class="row" style="top:1005.25px"><div class="cb"></div><div class="ic"><svg class="pen" width="20" height="20" viewBox="0 0 20 20"><path d="M12.31 2.59 L14.72 0.18 Q15.64 -0.74 16.56 0.18 L18.82 2.44 Q19.74 3.36 18.82 4.28 L16.41 6.69 Z M1.99 12.91 L11.61 3.29 L15.71 7.39 L6.09 17.01 L1.00 18.00 Z" fill="#37434d"/><path d="M4.89 13.97 L13.09 5.77" stroke="#fff" stroke-width="0.75"/><path d="M1.42 16.16 L1.78 14.11 L2.70 16.02 Z" fill="#fff"/></svg><svg class="mail" width="20" height="16" viewBox="0 0 20 16"><rect x="0.8" y="0.8" width="18.4" height="14.4" rx="0.8" fill="none" stroke="#37434d" stroke-width="1.6"/><path d="M1.2 1.4 L10 8.2 L18.8 1.4" fill="none" stroke="#37434d" stroke-width="1.5"/></svg></div><div class="c fn">Tesha</div><div class="c ln">Adkison</div><div class="c eid">PU1808</div><div class="c rt">Students</div><div class="c dt">Nov 01, 2024 11:40:18 PDT</div><div class="c by">Christian Cole</div></div>

<div id="hl"></div>
</body></html>
